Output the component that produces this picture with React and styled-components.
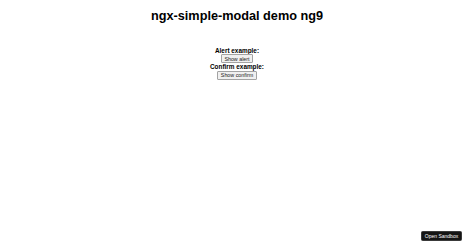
import React from 'react'
import styled, { createGlobalStyle } from 'styled-components'

const GlobalStyle = createGlobalStyle`
	html, body {
		margin: 0;
		padding: 0;
		background: #ffffff;
	}
	body {
		font-family: "Liberation Sans", Arial, sans-serif;
		color: #000000;
	}
`

const Page = styled.div`
	display: flex;
	flex-direction: column;
	align-items: center;
	height: 248px;
`
const Title = styled.h1`
	margin: 9.2px 0 0;
	font-size: 12.7px;
	font-weight: bold;
	line-height: 14.7px;
`
const Examples = styled.div`
	display: flex;
	flex-direction: column;
	align-items: center;
	margin-top: 23px;
`
const Label = styled.div`
	font-size: 6.4px;
	font-weight: bold;
	line-height: 7.4px;
`
const DemoButton = styled.button`
	font-family: "Liberation Sans", Arial, sans-serif;
	font-size: 5.33px;
	line-height: 6.1px;
	color: #1a1a1a;
	background: #f0f0f0;
	border: 0.5px solid #a3a3a3;
	border-radius: 1px;
	padding: 0.5px 2.4px;
	margin: 0;
`
const SandboxButton = styled.button`
	position: fixed;
	right: 12px;
	bottom: 7px;
	width: 41px;
	height: 10px;
	padding: 0;
	font-family: "Liberation Sans", Arial, sans-serif;
	font-size: 5px;
	color: #ffffff;
	background: #151515;
	border: 0.5px solid #3a3a3a;
	border-radius: 1.5px;
`

export default function App() {
	return (
		<>
			<GlobalStyle />
			<Page>
				<Title>ngx-simple-modal demo ng9</Title>
				<Examples>
					<Label>Alert example:</Label>
					<DemoButton>Show alert</DemoButton>
					<Label>Confirm example:</Label>
					<DemoButton>Show confirm</DemoButton>
				</Examples>
			</Page>
			<SandboxButton>Open Sandbox</SandboxButton>
		</>
	)
}
